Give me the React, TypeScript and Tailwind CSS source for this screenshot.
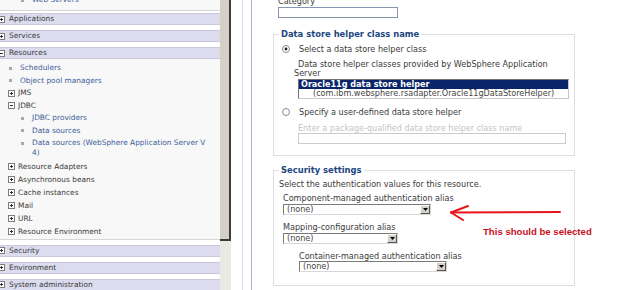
import React from 'react';

const font = "font-['DejaVu_Sans',sans-serif]";

function Box({ open }: { open?: boolean }) {
  return (
    <svg width="7" height="7" viewBox="0 0 7 7" className="shrink-0">
      <rect x="0.5" y="0.5" width="6" height="6" fill="#fff" stroke="#7c7c7c" />
      <line x1="2" y1="3.5" x2="5" y2="3.5" stroke="#333" />
      {!open && <line x1="3.5" y1="2" x2="3.5" y2="5" stroke="#333" />}
    </svg>
  );
}

function Header({ label, open, first }: { label: string; open?: boolean; first?: boolean }) {
  return (
    <div
      className={`h-[12px] bg-[#dcdcee] border-y border-[#c8c8dc] flex items-center gap-[4px] ${
        first ? 'mt-[2px]' : 'mt-[5px]'
      }`}
    >
      <span className="-ml-[2px] flex">
        <Box open={open} />
      </span>
      <span className="text-[#3a3a3a] leading-[10px]">{label}</span>
    </div>
  );
}

function Bullet({ label, deep }: { label: string; deep?: boolean }) {
  return (
    <div className={`flex items-center leading-[12.5px] ${deep ? 'pl-[21px]' : 'pl-[9px]'}`}>
      <span className="w-[3px] h-[3px] bg-[#a8a8a8] shrink-0" />
      <span className="ml-[8px] text-[#3d5d9b]">{label}</span>
    </div>
  );
}

function Folder({ label, open, tall }: { label: string; open?: boolean; tall?: boolean }) {
  return (
    <div className={`flex items-center pl-[8px] gap-[3px] ${tall ? 'leading-[13px]' : 'leading-[12.5px]'}`}>
      <Box open={open} />
      <span className="text-[#3a3a3a]">{label}</span>
    </div>
  );
}

function Radio({ checked }: { checked?: boolean }) {
  return (
    <svg width="8" height="8" viewBox="0 0 8 8" className="shrink-0">
      <circle cx="4" cy="4" r="3.5" fill="#fff" stroke="#8a8a8a" />
      {checked && <circle cx="4" cy="4" r="1.4" fill="#222" />}
    </svg>
  );
}

function Select({ width }: { width: string }) {
  return (
    <div className={`${width} h-[11px] bg-white border border-t-[#7a7a7a] border-l-[#7a7a7a] border-r-[#d8d8d8] border-b-[#d8d8d8] flex items-center`}>
      <span className="flex-1 pl-[3px] leading-[9px] text-[#444]">(none)</span>
      <span className="w-[10px] h-[9px] bg-[#d4d0c8] border border-t-white border-l-white border-r-[#555] border-b-[#555] flex items-center justify-center">
        <svg width="5" height="3" viewBox="0 0 5 3">
          <path d="M0 0 L5 0 L2.5 3 Z" fill="#000" />
        </svg>
      </span>
    </div>
  );
}

export default function App() {
  return (
    <div className={`relative w-[640px] h-[290px] overflow-hidden bg-white flex ${font}`}>
      {/* Navigation tree */}
      <div className="w-[220px] shrink-0 bg-white text-[7.4px]">
        <div className="h-[11px] bg-[#f8f8f8] border-b border-[#d6d6d6] overflow-hidden">
          <div className="-mt-[6px] pl-[21px] flex items-center leading-[12px]">
            <span className="w-[3px] h-[3px] bg-[#a8a8a8]" />
            <span className="ml-[8px] text-[#3d5d9b]">Web Servers</span>
          </div>
        </div>
        <Header label="Applications" first />
        <Header label="Services" />
        <Header label="Resources" open />
        <div className="bg-[#f8f8f8] border-b border-[#d6d6d6] pt-[3px] pb-[1px]">
          <Bullet label="Schedulers" />
          <Bullet label="Object pool managers" />
          <Folder label="JMS" />
          <Folder label="JDBC" open />
          <Bullet label="JDBC providers" deep />
          <Bullet label="Data sources" deep />
          <div className="flex items-start pl-[21px] py-[1.25px] leading-[10px]">
            <span className="w-[3px] h-[3px] bg-[#a8a8a8] shrink-0 mt-[4px]" />
            <span className="ml-[8px] text-[#3d5d9b] w-[180px]">
              Data sources (WebSphere Application Server V 4)
            </span>
          </div>
          <Folder label="Resource Adapters" tall />
          <Folder label="Asynchronous beans" tall />
          <Folder label="Cache instances" tall />
          <Folder label="Mail" tall />
          <Folder label="URL" tall />
          <Folder label="Resource Environment" tall />
        </div>
        <Header label="Security" />
        <Header label="Environment" />
        <Header label="System administration" />
      </div>

      {/* Scrollbar */}
      <div className="w-[11px] shrink-0 flex flex-col bg-[#ebe9e3]">
        <div className="h-[241px] shrink-0 bg-[#d4d0c8] border-r-2 border-b-2 border-[#3c3c3c]" />
      </div>

      {/* Frame borders */}
      <div className="w-[12px] shrink-0 bg-white border-r border-[#dedede]" />
      <div className="w-[9px] shrink-0 bg-white border-r border-[#aab2cc]" />

      {/* Content */}
      <div className="flex-1 pl-[21px] text-[8.1px] text-[#3a3a3a]">
        <div className="-mt-[4px] pl-[5px] leading-[10px]">Category</div>
        <div className="ml-[5px] mt-[1px] w-[120px] h-[11px] border border-[#8894b0] bg-white" />

        <fieldset className="mt-[11px] w-[302px] border border-[#dedede] px-0 pb-[11px]">
          <legend className="ml-[5px] px-[2px] leading-[10px] text-[8.4px] font-bold text-[#1d4680]">
            Data store helper class name
          </legend>
          <div className="mt-[4.5px] pl-[8px] h-[10px] flex items-center gap-[9px]">
            <Radio checked />
            <span className="leading-[10px]">Select a data store helper class</span>
          </div>
          <div className="mt-[6px] ml-[20px] w-[258px] leading-[9px] indent-[4px]">
            Data store helper classes provided by WebSphere Application Server
          </div>
          <div className="mt-[1px] ml-[24px] w-[271px] h-[20px] border border-t-[#707070] border-l-[#707070] border-r-[#c8c8c8] border-b-[#c8c8c8] bg-white flex flex-col">
            <div className="h-[9px] bg-[#0a246a] text-white font-bold leading-[9px] pl-[2px]">
              Oracle11g data store helper
            </div>
            <div className="leading-[9px] pl-[14px] text-[#444]">
              (com.ibm.websphere.rsadapter.Oracle11gDataStoreHelper)
            </div>
          </div>
          <div className="mt-[8.5px] pl-[8px] h-[10px] flex items-center gap-[9px]">
            <Radio />
            <span className="leading-[10px]">Specify a user-defined data store helper</span>
          </div>
          <div className="mt-[5.5px] pl-[24px] leading-[10px] text-[#c4c4c4]">
            Enter a package-qualified data store helper class name
          </div>
          <div className="ml-[24px] w-[268px] h-[11px] border border-[#cccccc] bg-white" />
        </fieldset>

        <fieldset className="mt-[9.5px] w-[302px] border border-[#dedede] px-0 pb-[13px]">
          <legend className="ml-[5px] px-[2px] leading-[10px] text-[8.4px] font-bold text-[#1d4680]">
            Security settings
          </legend>
          <div className="mt-[4px] pl-[5px] leading-[10px]">
            Select the authentication values for this resource.
          </div>
          <div className="mt-[3.5px] pl-[9px] leading-[10px]">Component-managed authentication alias</div>
          <div className="pl-[9px] mt-[1px]">
            <Select width="w-[148px]" />
          </div>
          <div className="mt-[7px] pl-[9px] leading-[10px]">Mapping-configuration alias</div>
          <div className="pl-[9px] mt-[1px]">
            <Select width="w-[115px]" />
          </div>
          <div className="mt-[7px] pl-[25px] leading-[10px]">Container-managed authentication alias</div>
          <div className="pl-[25px]">
            <Select width="w-[148px]" />
          </div>
        </fieldset>
      </div>

      {/* Annotation */}
      <svg className="absolute left-0 top-0 pointer-events-none" width="640" height="290" viewBox="0 0 640 290">
        <g stroke="#e8141c" strokeWidth="2" strokeLinecap="round" fill="none">
          <line x1="451" y1="212.5" x2="560" y2="212" />
          <line x1="451" y1="212.5" x2="468" y2="206" />
          <line x1="451" y1="212.5" x2="463" y2="220" />
        </g>
      </svg>
      <div className="absolute left-[483px] top-[226px] leading-[12px] text-[9.6px] font-bold text-[#c8101c] font-['Liberation_Sans',Arial,sans-serif]">
        This should be selected
      </div>
    </div>
  );
}
